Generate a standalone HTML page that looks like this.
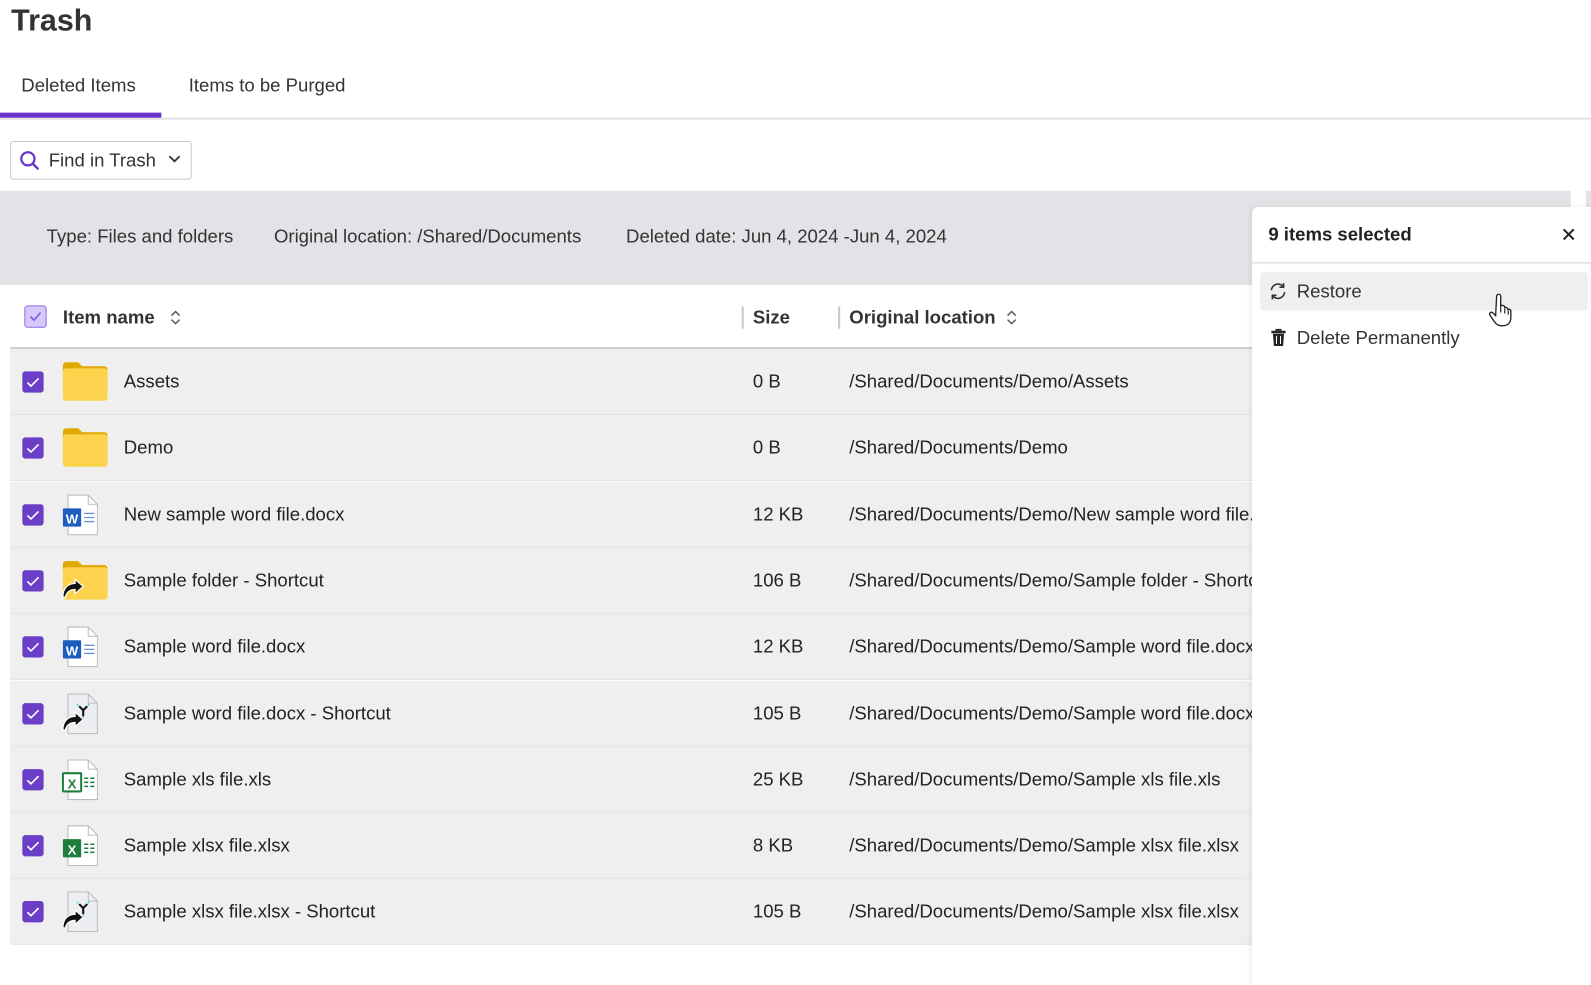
<!DOCTYPE html>
<html><head><meta charset="utf-8"><style>
*{box-sizing:border-box;margin:0;padding:0}
html,body{width:1591px;height:971px;overflow:hidden;background:#fff}
#w{position:absolute;left:0;top:0;width:1568px;height:957px;transform:scale(1.01467);transform-origin:0 0;font-family:"Liberation Sans",sans-serif;color:#2b2b2b}
.a{position:absolute;white-space:nowrap}
.row{position:absolute;left:10px;width:1224px;height:65px;background:#efefef;border-bottom:1.5px solid #e2e2e2;overflow:hidden}
.row .t{position:absolute;top:21px;font-size:18.3px;color:#222;white-space:nowrap}
.cb{position:absolute;left:12px;top:22px;width:21px;height:21px;border-radius:3px;background:#6a3ec6}
.cb svg{position:absolute;left:3px;top:3px}
.ic{position:absolute;left:51px;top:12px}
.f{font-size:18.3px}
</style></head><body><div id="w">
<div class="a" style="left:11px;top:4px;font-size:30px;font-weight:bold;color:#333">Trash</div>
<div class="a f" style="left:21px;top:73px;color:#333">Deleted Items</div>
<div class="a f" style="left:186px;top:73px;color:#333">Items to be Purged</div>
<div class="a" style="left:0;top:116px;width:1591px;height:2px;background:#e3e3e6"></div>
<div class="a" style="left:0;top:111px;width:159px;height:5px;background:#6a34cc"></div>
<div class="a" style="left:10px;top:139px;width:179px;height:38px;border:1.5px solid #c8c8c8;border-radius:3px"></div>
<svg class="a" style="left:19px;top:148px" width="20" height="20" viewBox="0 0 20 20"><circle cx="8.5" cy="8.5" r="6.5" fill="none" stroke="#6a34cc" stroke-width="2.2"/><path d="M13.2 13.2l5 5" stroke="#6a34cc" stroke-width="2.4" stroke-linecap="round"/></svg>
<div class="a f" style="left:48px;top:147px;color:#333">Find in Trash</div>
<svg class="a" style="left:165px;top:152px" width="14" height="10"><path d="M2 2l5 5 5-5" fill="none" stroke="#333" stroke-width="1.8"/></svg>
<div class="a" style="left:0;top:188px;width:1548px;height:93px;background:#e2e3e6"></div>
<div class="a" style="left:1563px;top:188px;width:28px;height:93px;background:#e2e3e6"></div>
<div class="a f" style="left:46px;top:222px;color:#333">Type: Files and folders</div>
<div class="a f" style="left:270px;top:222px;color:#333">Original location: /Shared/Documents</div>
<div class="a f" style="left:617px;top:222px;color:#333">Deleted date: Jun 4, 2024 -Jun 4, 2024</div>
<div class="a" style="left:24px;top:301px;width:22px;height:22px;border:1.5px solid #8c6be0;background:#d6c8fb;border-radius:3px"><svg style="position:absolute;left:3px;top:3px" width="14" height="14"><path d="M2 7l3.5 3.5L12 3" fill="none" stroke="#7a55d8" stroke-width="1.5"/></svg></div>
<div class="a f" style="left:62px;top:302px;font-weight:bold;color:#333">Item name</div>
<svg class="a" style="left:166px;top:304px" width="14" height="18"><path d="M3 7l4-4 4 4M3 11l4 4 4-4" fill="none" stroke="#555" stroke-width="1.4"/></svg>
<div class="a" style="left:731px;top:302px;width:1.5px;height:22px;background:#c8c8c8"></div>
<div class="a f" style="left:742px;top:302px;font-weight:bold;color:#333">Size</div>
<div class="a" style="left:826px;top:302px;width:1.5px;height:22px;background:#c8c8c8"></div>
<div class="a f" style="left:837px;top:302px;font-weight:bold;color:#333">Original location</div>
<svg class="a" style="left:990px;top:304px" width="14" height="18"><path d="M3 7l4-4 4 4M3 11l4 4 4-4" fill="none" stroke="#555" stroke-width="1.4"/></svg>
<div class="a" style="left:10px;top:342px;width:1224px;height:2.5px;background:#cfcfcf"></div>

<div id="rows"></div>
<script>
const folder='<svg width="46" height="40" viewBox="0 0 46 40"><path d="M1 4a3 3 0 0 1 3-3h12l4 4h22a3 3 0 0 1 3 3v4H1z" fill="#e0a800"/><rect x="1" y="7" width="44" height="32" rx="3" fill="#fcd34d"/></svg>';
const arrow='<path d="M1 36c0-8 5-13 12-13v-4l8 7-8 7v-4c-5 0-8 2-10 8z" fill="#111" stroke="#fff" stroke-width="1.2"/>';
const page='<path d="M6 1h20l9 9v30H6z" fill="#fff" stroke="#bbb" stroke-width="1"/><path d="M26 1v9h9" fill="none" stroke="#bbb"/>';
const word='<svg width="46" height="42" viewBox="0 0 46 42">'+page+'<rect x="1" y="14" width="18" height="18" rx="1" fill="#1c5dbf"/><text x="10" y="29" font-size="13" font-weight="bold" fill="#fff" text-anchor="middle" font-family="Liberation Sans">W</text><path d="M22 19h10M22 23h10M22 27h10" stroke="#6b8fd6" stroke-width="1.3"/></svg>';
const xls='<svg width="46" height="42" viewBox="0 0 46 42">'+page+'<rect x="1" y="14" width="18" height="18" rx="1" fill="#fff" stroke="#1e7d3c" stroke-width="2"/><text x="10" y="29" font-size="13" font-weight="bold" fill="#1e7d3c" text-anchor="middle" font-family="Liberation Sans">X</text><path d="M22 19h4M28 19h4M22 23h4M28 23h4M22 27h4M28 27h4" stroke="#1e7d3c" stroke-width="1.5"/></svg>';
const xlsx='<svg width="46" height="42" viewBox="0 0 46 42">'+page+'<rect x="1" y="14" width="18" height="18" rx="1" fill="#1e7d3c"/><text x="10" y="29" font-size="13" font-weight="bold" fill="#fff" text-anchor="middle" font-family="Liberation Sans">X</text><path d="M22 19h4M28 19h4M22 23h4M28 23h4M22 27h4M28 27h4" stroke="#1e7d3c" stroke-width="1.5"/></svg>';
const sc='<svg width="46" height="44" viewBox="0 0 46 44"><path d="M6 1h20l9 9v30H6z" fill="#eceef2" stroke="#bbb"/><path d="M26 1v9h9" fill="none" stroke="#bbb"/><path d="M17 13l4 4 4-4M21 17v6" fill="none" stroke="#111" stroke-width="2"/><path d="M15 11l1 1M27 11l-1 1M21 24v2" stroke="#3cc" stroke-width="1.5"/>'+arrow+'</svg>';
const fsc='<svg width="46" height="44" viewBox="0 0 46 44"><path d="M1 4a3 3 0 0 1 3-3h12l4 4h22a3 3 0 0 1 3 3v4H1z" fill="#e0a800"/><rect x="1" y="7" width="44" height="32" rx="3" fill="#fcd34d"/>'+arrow+'</svg>';
const rows=[[folder,'Assets','0 B','/Shared/Documents/Demo/Assets'],[folder,'Demo','0 B','/Shared/Documents/Demo'],[word,'New sample word file.docx','12 KB','/Shared/Documents/Demo/New sample word file.docx'],[fsc,'Sample folder - Shortcut','106 B','/Shared/Documents/Demo/Sample folder - Shortcut'],[word,'Sample word file.docx','12 KB','/Shared/Documents/Demo/Sample word file.docx'],[sc,'Sample word file.docx - Shortcut','105 B','/Shared/Documents/Demo/Sample word file.docx'],[xls,'Sample xls file.xls','25 KB','/Shared/Documents/Demo/Sample xls file.xls'],[xlsx,'Sample xlsx file.xlsx','8 KB','/Shared/Documents/Demo/Sample xlsx file.xlsx'],[sc,'Sample xlsx file.xlsx - Shortcut','105 B','/Shared/Documents/Demo/Sample xlsx file.xlsx']];
let h='';rows.forEach((r,i)=>{h+=`<div class="row" style="top:${344+i*65.3}px"><div class="cb"><svg width="15" height="15"><path d="M2 8l3.5 3.5L13 4" fill="none" stroke="#fff" stroke-width="1.6"/></svg></div><div class="ic">${r[0]}</div><div class="t" style="left:112px">${r[1]}</div><div class="t" style="left:732px">${r[2]}</div><div class="t" style="left:827px">${r[3]}</div></div>`});
document.getElementById('rows').innerHTML=h;
</script>
<div class="a" style="left:1234px;top:204px;width:357px;height:767px;background:#fff;box-shadow:-2px 0 6px rgba(0,0,0,0.06);border-radius:6px 0 0 0"></div>
<div class="a f" style="left:1250px;top:220px;font-weight:bold;color:#222">9 items selected</div>
<svg class="a" style="left:1539px;top:224px" width="14" height="14"><path d="M2 2l10 10M12 2L2 12" stroke="#222" stroke-width="2"/></svg>
<div class="a" style="left:1234px;top:258px;width:357px;height:1.5px;background:#e4e4e4"></div>
<div class="a" style="left:1242px;top:268px;width:323px;height:38px;background:#efefef;border-radius:4px"></div>
<svg class="a" style="left:1250px;top:278px" width="19" height="18" viewBox="0 0 19 18"><path d="M3 8a6.5 6.5 0 0 1 12-3M16 10a6.5 6.5 0 0 1-12 3" fill="none" stroke="#333" stroke-width="1.6"/><path d="M15 1v4h-4M4 17v-4h4" fill="none" stroke="#333" stroke-width="1.6"/></svg>
<div class="a f" style="left:1278px;top:276px;color:#333">Restore</div>
<svg class="a" style="left:1252px;top:324px" width="16" height="18" viewBox="0 0 16 18"><rect x="1" y="2" width="14" height="2.5" fill="#222"/><rect x="5" y="0" width="6" height="2" fill="#222"/><path d="M2.5 5h11l-1 12h-9z" fill="#222"/><path d="M6 7v8M10 7v8" stroke="#fff" stroke-width="1"/></svg>
<div class="a f" style="left:1278px;top:322px;color:#333">Delete Permanently</div>
<svg class="a" style="left:1466px;top:289px" width="26" height="34" viewBox="0 0 26 34"><path d="M9 3a2 2 0 0 1 4 0v10l1-1h1a2 2 0 0 1 2 2h1a2 2 0 0 1 2 2 2 2 0 0 1 3 2v6c0 5-3 8-8 8h-2c-3 0-5-2-7-5l-4-6a2 2 0 0 1 3-2l3 3z" fill="#fff" stroke="#222" stroke-width="1.3"/><path d="M13 14v5M17 15v5M20.5 17v4" stroke="#222" stroke-width="1.2"/></svg>
</div></body></html>
